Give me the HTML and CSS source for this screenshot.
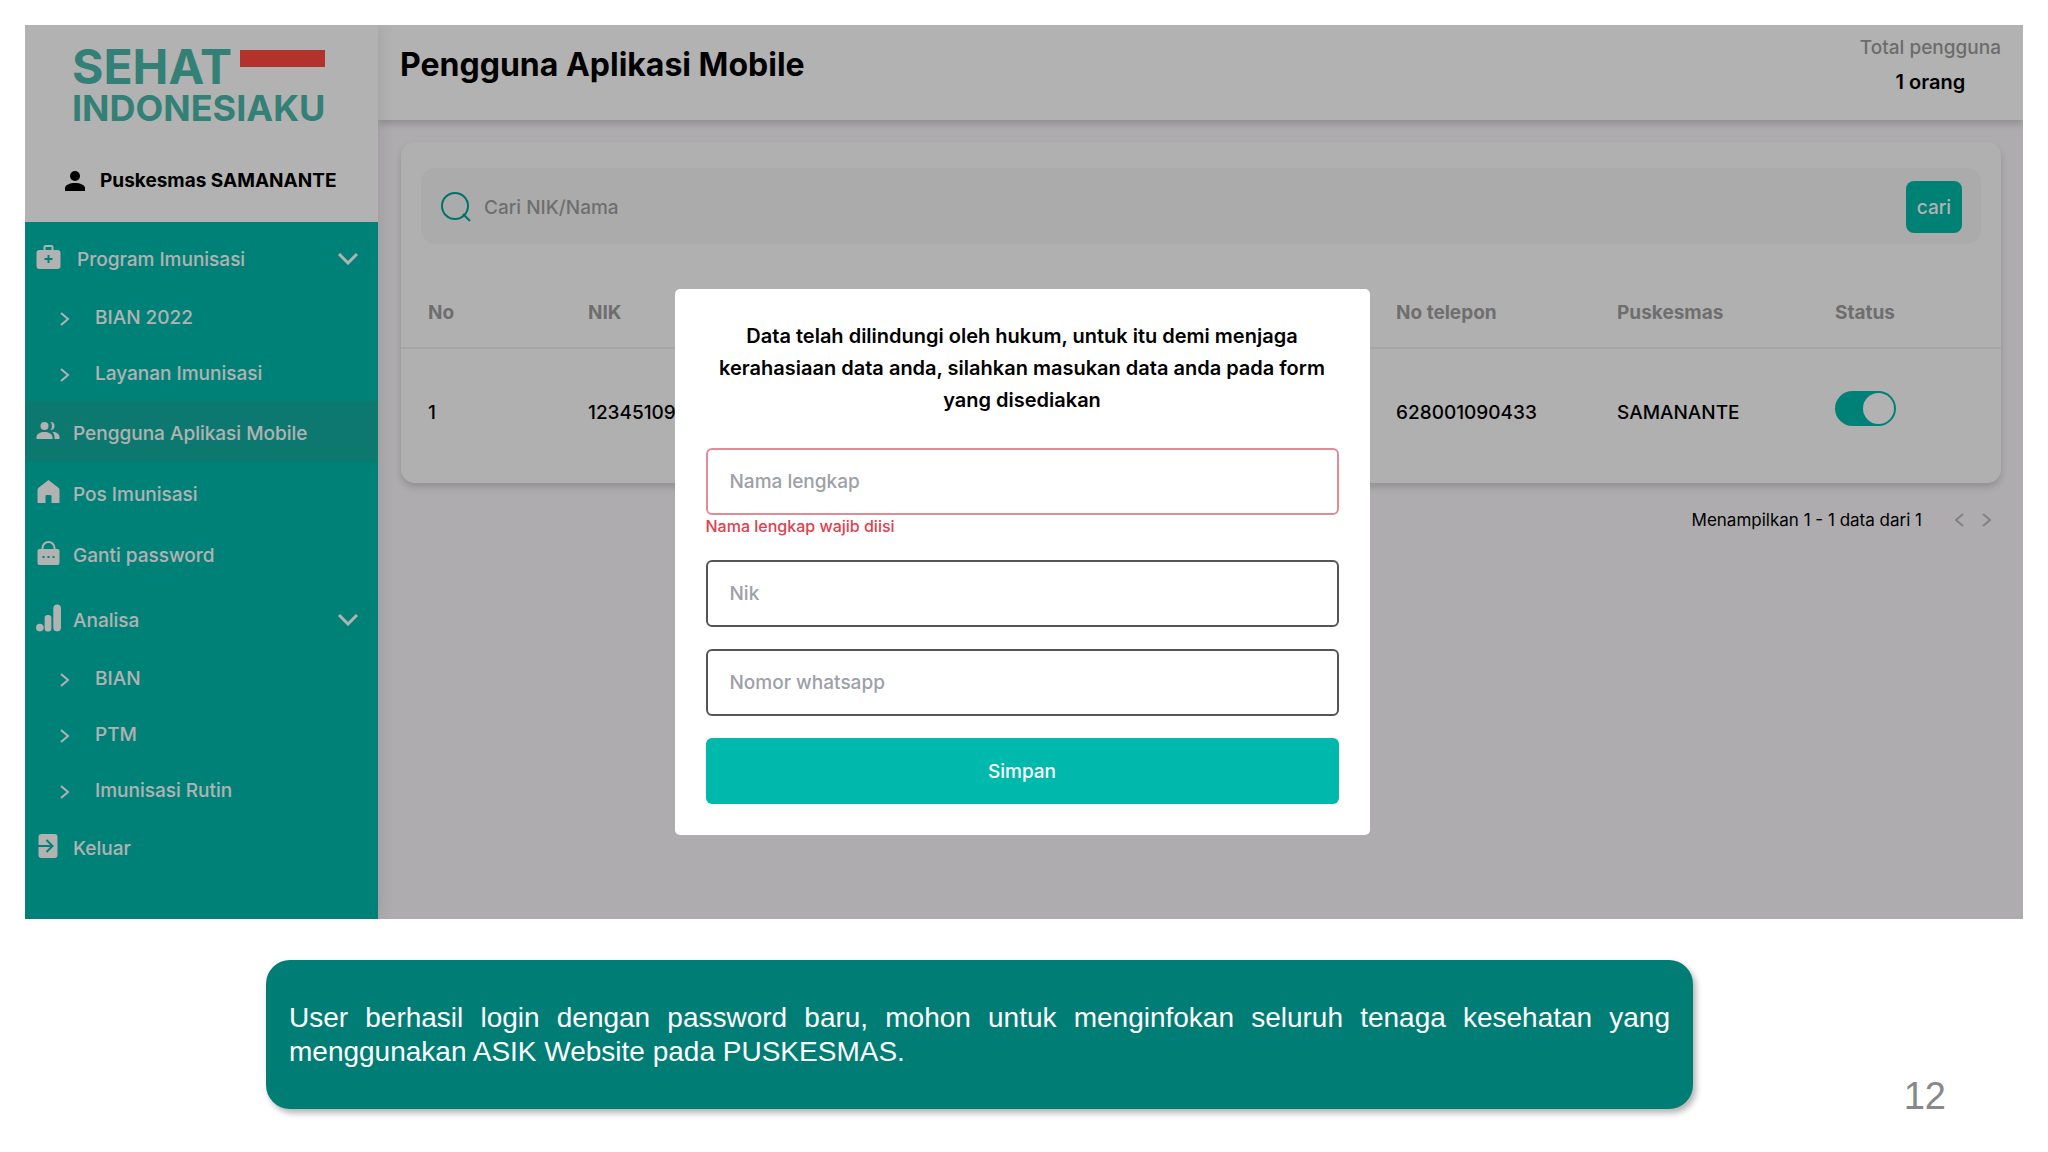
FILE: index.html
```
<!DOCTYPE html>
<html lang="id">
<head>
    <meta charset="UTF-8">
    <meta name="viewport" content="width=device-width, initial-scale=1.0">
    <title>Pengguna Aplikasi Mobile</title>
    <link rel="stylesheet" href="styles.css">
</head>
<body>
    <div class="app">
        <aside class="sidebar">
            <div class="brand">
                <div class="logo">
                    <div class="logo-top"><span>SEHAT</span><i class="logo-bar"></i></div>
                    <div class="logo-bottom">INDONESIAKU</div>
                </div>
                <div class="account">
                    <svg width="20" height="20" viewBox="0 0 20 20"><circle cx="10" cy="5" r="5"/><path d="M0 20v-3c0-3 5-5 10-5s10 2 10 5v3z"/></svg>
                    <span>Puskesmas SAMANANTE</span>
                </div>
            </div>
            <nav class="menu">
                <a class="menu-item menu-group menu-program" href="#">
                    <svg class="icon" viewBox="0 0 24 24"><path fill-rule="evenodd" d="M7 5V2q0-2 2-2h6q2 0 2 2v3h4q3 0 3 3v13q0 3-3 3H3q-3 0-3-3V8q0-3 3-3zm2 0h6V2H9zm2 5v3H8v2h3v3h2v-3h3v-2h-3v-3z"/></svg>
                    <span>Program Imunisasi</span>
                    <svg class="arrow" viewBox="0 0 20 12"><path d="M1 1l9 9 9-9"/></svg>
                </a>
                <a class="sub-item" href="#"><svg class="caret" viewBox="0 0 10 14"><path d="M1 1l7 6-7 6"/></svg>BIAN 2022</a>
                <a class="sub-item" href="#"><svg class="caret" viewBox="0 0 10 14"><path d="M1 1l7 6-7 6"/></svg>Layanan Imunisasi</a>
                <a class="menu-item active" href="#">
                    <svg class="icon" viewBox="0 0 24 24"><circle cx="8" cy="7" r="4"/><path d="M14 3a4 4 0 1 1 0 8 6 6 0 0 0 0-8zM0 20v-2c0-3 4-5 8-5s8 2 8 5v2zM16 13c4 0 7 2 7 5v2h-5v-2c0-2-1-4-2-5z"/></svg>
                    <span>Pengguna Aplikasi Mobile</span>
                </a>
                <a class="menu-item" href="#">
                    <svg class="icon" viewBox="0 0 24 24"><path d="M1 10q0-2 2-3l9-7 9 7q2 1 2 3v13h-8v-7q0-1-1-1h-4q-1 0-1 1v7H1z"/></svg>
                    <span>Pos Imunisasi</span>
                </a>
                <a class="menu-item" href="#">
                    <svg class="icon" viewBox="0 0 24 24"><path fill="none" stroke="#fff" stroke-width="2" d="M6 9V7a6 6 0 0 1 12 0v2"/><path fill-rule="evenodd" d="M3 8h18q2 0 2 2v12q0 2-2 2H3q-2 0-2-2V10q0-2 2-2zm3 7v2h2v-2zm5 0v2h2v-2zm5 0v2h2v-2z"/></svg>
                    <span>Ganti password</span>
                </a>
                <a class="menu-item menu-group" href="#">
                    <svg class="icon icon-chart" viewBox="0 0 26 28"><circle cx="4" cy="24" r="4"/><rect x="9" y="11" width="7" height="17" rx="3"/><rect x="18" y="0" width="8" height="28" rx="4"/></svg>
                    <span>Analisa</span>
                    <svg class="arrow" viewBox="0 0 20 12"><path d="M1 1l9 9 9-9"/></svg>
                </a>
                <a class="sub-item" href="#"><svg class="caret" viewBox="0 0 10 14"><path d="M1 1l7 6-7 6"/></svg>BIAN</a>
                <a class="sub-item" href="#"><svg class="caret" viewBox="0 0 10 14"><path d="M1 1l7 6-7 6"/></svg>PTM</a>
                <a class="sub-item" href="#"><svg class="caret" viewBox="0 0 10 14"><path d="M1 1l7 6-7 6"/></svg>Imunisasi Rutin</a>
                <a class="menu-item menu-logout" href="#">
                    <svg class="icon" viewBox="0 0 24 24"><rect x="2" y="0" width="19" height="24" rx="3"/><path class="cut" d="M0 12h15M10 6l6 6-6 6"/></svg>
                    <span>Keluar</span>
                </a>
            </nav>
        </aside>

        <main class="main">
            <header class="header">
                <h1>Pengguna Aplikasi Mobile</h1>
                <div class="total">
                    <span>Total pengguna</span>
                    <strong>1 orang</strong>
                </div>
            </header>

            <section class="card">
                <form class="search">
                    <svg width="30" height="30" viewBox="0 0 30 30"><circle cx="14" cy="14" r="13"/><path d="M22 22l7 7"/></svg>
                    <input type="text" aria-label="Cari NIK/Nama" placeholder="Cari NIK/Nama">
                    <button type="button">cari</button>
                </form>
                <table class="user-table">
                    <thead>
                        <tr>
                            <th class="col-no">No</th>
                            <th>NIK</th>
                            <th class="col-phone">No telepon</th>
                            <th class="col-place">Puskesmas</th>
                            <th class="col-status">Status</th>
                        </tr>
                    </thead>
                    <tbody>
                        <tr>
                            <td>1</td>
                            <td>12345109</td>
                            <td>628001090433</td>
                            <td>SAMANANTE</td>
                            <td><input class="toggle" type="checkbox" aria-label="Status" checked></td>
                        </tr>
                    </tbody>
                </table>
            </section>

            <div class="pagination">
                <span>Menampilkan 1 - 1 data dari 1</span>
                <button type="button" aria-label="Sebelumnya"><svg class="page-arrow" viewBox="0 0 10 14"><path d="M8 1L1 7l7 6"/></svg></button>
                <button type="button" aria-label="Berikutnya"><svg class="page-arrow" viewBox="0 0 10 14"><path d="M1 1l7 6-7 6"/></svg></button>
            </div>
        </main>

        <div class="overlay">
            <form class="modal">
                <h2>Data telah dilindungi oleh hukum, untuk itu demi menjaga kerahasiaan data anda, silahkan masukan data anda pada form yang disediakan</h2>
                <div class="field error">
                    <input type="text" id="nama" aria-label="Nama lengkap" placeholder="Nama lengkap">
                    <label for="nama">Nama lengkap wajib diisi</label>
                </div>
                <div class="field">
                    <input type="text" aria-label="Nik" placeholder="Nik">
                </div>
                <div class="field">
                    <input type="text" aria-label="Nomor whatsapp" placeholder="Nomor whatsapp">
                </div>
                <button type="button">Simpan</button>
            </form>
        </div>
    </div>

    <footer class="footer">
        <p class="note">User berhasil login dengan password baru, mohon untuk menginfokan seluruh tenaga kesehatan yang menggunakan ASIK Website pada PUSKESMAS.</p>
        <span class="page-number">12</span>
    </footer>
</body>
</html>
```
FILE: styles.css
```
* {
    box-sizing: border-box;
}

body {
    margin: 0;
    padding: 25px;
    background-color: #fff;
    font-family: Inter, "Liberation Sans", sans-serif;
    font-size: 19px;
    font-weight: 500;
    color: #000;
}

input, button {
    font: inherit;
}

.app {
    position: relative;
    display: flex;
    overflow: hidden;
    background-color: #f9f6f9;
}

/* sidebar */
.sidebar {
    position: relative;
    z-index: 1;
    width: 353px;
    flex-shrink: 0;
    background-color: #00b9ad;
    box-shadow: 0 0 16px rgba(0,0,0,0.12);
}

.brand {
    height: 197px;
    padding: 17px 0 0 47px;
    background-color: #fff;
}

.logo {
    color: #4ab8a9;
    font-weight: 700;
}

.logo-top {
    display: flex;
    gap: 6px;
    font-size: 48px;
    line-height: 50px;
}

.logo-bar {
    width: 85px;
    height: 17px;
    margin: 8px 0 0 2px;
    background-color: #fe4940;
}

.logo-bottom {
    font-size: 36px;
    line-height: 32px;
}

.account {
    display: flex;
    align-items: center;
    gap: 15px;
    margin: 45px 0 0 -7px;
    font-weight: 700;
    line-height: 24px;
}

.menu {
    padding: 7px 0 40px;
}

.menu a {
    color: #fff;
    text-decoration: none;
}

.menu-item {
    display: flex;
    align-items: center;
    gap: 12px;
    height: 61px;
    padding: 4px 20px 0 11px;
}

.menu-item.active {
    background-color: #12ada1;
}

.menu-group {
    height: 60px;
    padding-top: 0;
}

.menu-program {
    gap: 16px;
}

.menu-item + .menu-group {
    margin-top: 6px;
}

.menu-logout {
    padding-top: 0;
}

.icon {
    width: 25px;
    height: 24px;
    margin-bottom: 5px;
    fill: #fff;
}

.icon-chart {
    height: 28px;
}

.icon .cut {
    fill: none;
    stroke: #00b9ad;
    stroke-width: 2;
}

.arrow {
    width: 20px;
    height: 12px;
    margin-left: auto;
    fill: none;
    stroke: #fff;
    stroke-width: 3;
}

.sub-item {
    display: flex;
    align-items: center;
    gap: 25px;
    height: 56px;
    padding-left: 35px;
}

.caret {
    width: 10px;
    height: 14px;
    margin-top: 4px;
    fill: none;
    stroke: #fff;
    stroke-width: 2;
}

/* main */
.main {
    flex: 1;
}

.header {
    display: flex;
    justify-content: space-between;
    height: 95px;
    padding: 6px 22px 0;
    background-color: #fff;
    box-shadow: 0 3px 8px rgba(0,0,0,0.2);
}

.header h1 {
    margin: 14px 0 0;
    font-size: 32px;
    line-height: 40px;
}

.total {
    display: flex;
    flex-direction: column;
    align-items: center;
    line-height: 34px;
    color: #9b9b9b;
}

.total strong {
    font-size: 20px;
    font-weight: 600;
    color: #000;
}

.card {
    margin: 22px 22px 0 23px;
    padding-top: 26px;
    background-color: #fefcfe;
    border-radius: 14px;
    box-shadow: 0 4px 7px rgba(0,0,0,0.16);
}

.search {
    display: flex;
    align-items: center;
    gap: 11px;
    height: 76px;
    margin: 0 20px;
    padding: 2px 19px 0 20px;
    background-color: #f7f5f7;
    border-radius: 14px;
}

.search svg {
    fill: none;
    stroke: #00a595;
    stroke-width: 2;
}

.search input {
    flex: 1;
    border: none;
    background: none;
}

.search input::placeholder {
    color: #a09ea0;
}

.search button {
    width: 56px;
    height: 52px;
    padding: 0;
    border: none;
    border-radius: 8px;
    background-color: #00b9a8;
    color: #fff;
}

.user-table {
    width: 100%;
    border-collapse: collapse;
    table-layout: fixed;
    text-align: left;
}

.user-table th {
    height: 104px;
    padding: 34px 0 0 27px;
    border-bottom: 2px solid #f0eef0;
    font-weight: 700;
    color: #a09ea0;
}

.user-table td {
    height: 135px;
    padding: 0 0 8px 27px;
}

.col-no {
    width: 160px;
}

.col-phone {
    width: 221px;
}

.col-place {
    width: 218px;
}

.col-status {
    width: 193px;
}

.toggle {
    display: flex;
    justify-content: flex-end;
    width: 61px;
    height: 35px;
    margin: 0 0 8px;
    padding: 2px;
    appearance: none;
    border-radius: 18px;
    background-color: #00b9ad;
}

.toggle::before {
    content: "";
    width: 31px;
    border-radius: 50%;
    background-color: #fff;
}

.pagination {
    display: flex;
    align-items: center;
    justify-content: flex-end;
    gap: 17px;
    padding: 25px 31px 0 0;
    font-size: 17px;
    font-weight: 400;
    line-height: 24px;
}

.pagination span {
    margin-right: 16px;
}

.pagination button {
    display: flex;
    padding: 0;
    border: none;
    background: none;
}

.page-arrow {
    width: 10px;
    height: 14px;
    fill: none;
    stroke: #bbb;
    stroke-width: 2;
}

/* modal */
.overlay {
    position: absolute;
    inset: 0;
    z-index: 2;
    display: flex;
    align-items: flex-start;
    justify-content: center;
    padding: 264px 4px 0 0;
    background-color: rgba(0,0,0,0.3);
}

.modal {
    display: flex;
    flex-direction: column;
    gap: 22px;
    width: 695px;
    padding: 31px;
    border-radius: 5px;
    background-color: #fff;
}

.modal h2 {
    margin: 0 0 10px;
    font-size: 20px;
    font-weight: 600;
    line-height: 32px;
    text-align: center;
}

.field input {
    display: block;
    width: 100%;
    height: 67px;
    padding: 0 22px;
    border: 2px solid #555;
    border-radius: 6px;
}

.field input::placeholder {
    color: #9ca0a8;
}

.field.error input {
    border-color: #e08b95;
}

.field label {
    display: block;
    font-size: 16px;
    line-height: 23px;
    color: #e0404c;
}

.modal button {
    height: 66px;
    border: none;
    border-radius: 6px;
    background-color: #00b9ad;
    color: #fff;
}

/* footer */
.footer {
    display: flex;
    align-items: flex-end;
    justify-content: space-between;
    padding: 41px 77px 0 241px;
    font-family: "Liberation Sans", Arial, sans-serif;
    font-weight: 400;
}

.note {
    flex: 1;
    max-width: 1427px;
    margin: 0;
    padding: 41px 23px 40px;
    border-radius: 24px;
    background-color: #007d75;
    box-shadow: 3px 4px 6px rgba(0,0,0,0.3);
    color: #fff;
    font-size: 28px;
    line-height: 34px;
    text-align: justify;
}

.page-number {
    font-size: 38px;
    line-height: 26px;
    color: #888;
}
```
